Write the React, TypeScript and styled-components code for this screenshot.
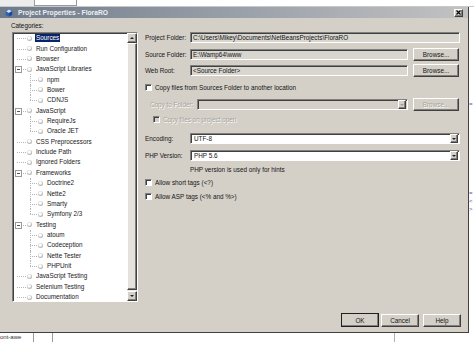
import React from "react";
import styled, { createGlobalStyle, css } from "styled-components";

const FACE = "#d4d0c8";
const FONT = "6.35px";

const GlobalStyle = createGlobalStyle`
  html, body {
    margin: 0;
    padding: 0;
    background: #fff;
  }
  body {
    font-family: "Liberation Sans", Arial, sans-serif;
    overflow: hidden;
  }
`;

interface TreeItem {
  label: string;
  level: number;
  expander?: boolean;
  last?: boolean;
  selected?: boolean;
}

const tree: TreeItem[] = [
  { label: "Sources", level: 0, selected: true },
  { label: "Run Configuration", level: 0 },
  { label: "Browser", level: 0 },
  { label: "JavaScript Libraries", level: 0, expander: true },
  { label: "npm", level: 1 },
  { label: "Bower", level: 1 },
  { label: "CDNJS", level: 1, last: true },
  { label: "JavaScript", level: 0, expander: true },
  { label: "RequireJs", level: 1 },
  { label: "Oracle JET", level: 1, last: true },
  { label: "CSS Preprocessors", level: 0 },
  { label: "Include Path", level: 0 },
  { label: "Ignored Folders", level: 0 },
  { label: "Frameworks", level: 0, expander: true },
  { label: "Doctrine2", level: 1 },
  { label: "Nette2", level: 1 },
  { label: "Smarty", level: 1 },
  { label: "Symfony 2/3", level: 1, last: true },
  { label: "Testing", level: 0, expander: true },
  { label: "atoum", level: 1 },
  { label: "Codeception", level: 1 },
  { label: "Nette Tester", level: 1 },
  { label: "PHPUnit", level: 1, last: true },
  { label: "JavaScript Testing", level: 0 },
  { label: "Selenium Testing", level: 0 },
  { label: "Documentation", level: 0 },
];

const App: React.FC = () => {
  return (
    <Page>
      <GlobalStyle />
      <TopStrip>
        <TopGrey />
        <TopTab />
      </TopStrip>
      <Middle>
        <Dialog>
          <TitleBar>
            <svg width="8" height="8" viewBox="0 0 8 8">
              <circle cx="4" cy="4" r="3.6" fill="#2f63b5" />
              <path d="M4 0.6 L6.9 2.3 L4 4 L1.1 2.3 Z" fill="#cfe0f6" />
              <path d="M4 4 L6.9 2.3 L6.9 5.6 L4 7.3 Z" fill="#1c4690" />
            </svg>
            <TitleText>Project Properties - FloraRO</TitleText>
            <CloseButton>
              <svg width="5" height="5" viewBox="0 0 5 5">
                <path d="M0.5 0.5 L4.5 4.5 M4.5 0.5 L0.5 4.5" stroke="#000" strokeWidth="1.1" />
              </svg>
            </CloseButton>
          </TitleBar>
          <Body>
            <Main>
              <LeftColumn>
                <CategoriesLabel>Categories:</CategoriesLabel>
                <TreePanel>
                  <TreeList>
                    {tree.map((item) => (
                      <TreeRow key={item.label} $level={item.level}>
                        <Connector $child={item.level > 0} $last={item.last}>
                          {item.expander && <Expander />}
                        </Connector>
                        <NodeDot />
                        <NodeLabel $selected={item.selected}>{item.label}</NodeLabel>
                      </TreeRow>
                    ))}
                  </TreeList>
                  <ScrollBar>
                    <ScrollArrow>
                      <ArrowUp />
                    </ScrollArrow>
                    <ScrollTrack>
                      <ScrollThumb />
                    </ScrollTrack>
                    <ScrollArrow>
                      <ArrowDown />
                    </ScrollArrow>
                  </ScrollBar>
                </TreePanel>
              </LeftColumn>
              <RightColumn>
                <FormRow $top={0}>
                  <FieldLabel>Project Folder:</FieldLabel>
                  <TextField>{"C:\\Users\\Mikey\\Documents\\NetBeansProjects\\FloraRO"}</TextField>
                </FormRow>
                <FormRow $top={3.5}>
                  <FieldLabel>Source Folder:</FieldLabel>
                  <TextField>{"E:\\Wamp64\\www"}</TextField>
                  <Button $width={46}>Browse...</Button>
                </FormRow>
                <FormRow $top={3.5}>
                  <FieldLabel>Web Root:</FieldLabel>
                  <TextField>{"<Source Folder>"}</TextField>
                  <Button $width={46}>Browse...</Button>
                </FormRow>
                <FormRow $top={4}>
                  <CheckBox />
                  <CheckLabel>Copy files from Sources Folder to another location</CheckLabel>
                </FormRow>
                <FormRow $top={4} $indent={5}>
                  <FieldLabel $width={47} $disabled>
                    Copy to Folder:
                  </FieldLabel>
                  <ComboBox $disabled>
                    <ComboText />
                    <ComboArrow>
                      <ArrowDown $disabled />
                    </ComboArrow>
                  </ComboBox>
                  <Button $width={46} $disabled>
                    Browse...
                  </Button>
                </FormRow>
                <FormRow $top={2} $indent={8}>
                  <CheckBox $disabled />
                  <CheckLabel $disabled>Copy files on project open</CheckLabel>
                </FormRow>
                <FormRow $top={6}>
                  <FieldLabel>Encoding:</FieldLabel>
                  <ComboBox>
                    <ComboText>UTF-8</ComboText>
                    <ComboArrow>
                      <ArrowDown />
                    </ComboArrow>
                  </ComboBox>
                </FormRow>
                <FormRow $top={4}>
                  <FieldLabel>PHP Version:</FieldLabel>
                  <ComboBox>
                    <ComboText>PHP 5.6</ComboText>
                    <ComboArrow>
                      <ArrowDown />
                    </ComboArrow>
                  </ComboBox>
                </FormRow>
                <HintRow>PHP version is used only for hints</HintRow>
                <FormRow $top={1.5}>
                  <CheckBox />
                  <CheckLabel>{"Allow short tags (<?)"}</CheckLabel>
                </FormRow>
                <FormRow $top={1}>
                  <CheckBox />
                  <CheckLabel>{"Allow ASP tags (<% and %>)"}</CheckLabel>
                </FormRow>
              </RightColumn>
            </Main>
            <Footer>
              <Button $width={38} $default>
                OK
              </Button>
              <Button $width={38}>Cancel</Button>
              <Button $width={38} $gap={5}>
                Help
              </Button>
            </Footer>
          </Body>
        </Dialog>
        <Gutter>
          <GutterText $top={94}>=</GutterText>
          <GutterText $top={82}>=</GutterText>
          <GutterText $top={1}>&lt;</GutterText>
          <GutterText $top={1}>&gt;</GutterText>
        </Gutter>
      </Middle>
      <BottomStrip>
        <BottomText>ont-awe</BottomText>
        <BottomTab />
        <BottomDivider />
      </BottomStrip>
    </Page>
  );
};

export default App;

const raised = css`
  border: 1px solid;
  border-color: #fff #404040 #404040 #fff;
  box-shadow: inset -1px -1px 0 #808080;
`;

const sunken = css`
  border: 1px solid;
  border-color: #808080 #fff #fff #808080;
  box-shadow: inset 1px 1px 0 #404040;
`;

const Page = styled.div`
  width: 474px;
  height: 342px;
  display: flex;
  flex-direction: column;
  background: #fff;
  overflow: hidden;
`;

const TopStrip = styled.div`
  height: 7px;
  display: flex;
  border-bottom: 1px solid #c8c8c8;
  box-sizing: border-box;
`;

const TopGrey = styled.div`
  width: 34px;
  background: #ececec;
`;

const TopTab = styled.div`
  width: 41px;
  border: 1px solid #9a9a9a;
  border-top: none;
  background: #fff;
`;

const Middle = styled.div`
  display: flex;
  height: 326px;
`;

const Dialog = styled.div`
  width: 469px;
  height: 326px;
  box-sizing: border-box;
  display: flex;
  flex-direction: column;
  border-right: 1px solid #404040;
  border-bottom: 1px solid #404040;
`;

const TitleBar = styled.div`
  height: 11px;
  flex-shrink: 0;
  display: flex;
  align-items: center;
  gap: 5px;
  padding: 0 5px;
  background: linear-gradient(90deg, #6f7a89 0%, #959ca6 45%, #c2c2c2 100%);
`;

const TitleText = styled.span`
  font-size: 6.7px;
  font-weight: bold;
  color: #eef0f4;
  line-height: 11px;
`;

const CloseButton = styled.div`
  margin-left: auto;
  width: 9px;
  height: 8px;
  box-sizing: border-box;
  background: ${FACE};
  ${raised};
  display: flex;
  align-items: center;
  justify-content: center;
`;

const Body = styled.div`
  flex: 1;
  background: ${FACE};
  display: flex;
  flex-direction: column;
`;

const Main = styled.div`
  height: 284px;
  display: flex;
  align-items: flex-start;
`;

const LeftColumn = styled.div`
  width: 126px;
  margin-left: 12px;
  display: flex;
  flex-direction: column;
`;

const CategoriesLabel = styled.div`
  font-size: ${FONT};
  line-height: 9px;
  color: #111;
  margin: 3px 0 2px -1px;
`;

const TreePanel = styled.div`
  height: 270px;
  box-sizing: border-box;
  display: flex;
  background: #fff;
  ${sunken};
  overflow: hidden;
`;

const TreeList = styled.div`
  flex: 1;
  overflow: hidden;
`;

const TreeRow = styled.div<{ $level: number }>`
  height: 10.36px;
  display: flex;
  align-items: center;
  padding-left: ${(p) => 4 + p.$level * 11}px;
`;

const Connector = styled.div<{ $child?: boolean; $last?: boolean }>`
  position: relative;
  width: 10px;
  height: 100%;
  flex-shrink: 0;
  &::before {
    content: "";
    position: absolute;
    left: ${(p) => (p.$child ? 2 : 0)}px;
    right: 1px;
    top: 50%;
    border-top: 1px dotted #b4b4b4;
  }
  &::after {
    content: "";
    display: ${(p) => (p.$child ? "block" : "none")};
    position: absolute;
    left: 1.5px;
    top: 0;
    height: ${(p) => (p.$last ? "50%" : "100%")};
    border-left: 1px dotted #b4b4b4;
  }
`;

const Expander = styled.div`
  position: absolute;
  left: -2px;
  top: 50%;
  width: 7px;
  height: 7px;
  margin-top: -3px;
  box-sizing: border-box;
  border: 1px solid #9a9a9a;
  background: #fff;
  z-index: 1;
  &::after {
    content: "";
    position: absolute;
    left: 1px;
    right: 1px;
    top: 2px;
    border-top: 1px solid #555;
  }
`;

const NodeDot = styled.div`
  width: 5px;
  height: 5px;
  flex-shrink: 0;
  border-radius: 50%;
  background: radial-gradient(circle at 45% 40%, #fff 0 25%, #bcbcbc 60%, #999 100%);
`;

const NodeLabel = styled.span<{ $selected?: boolean }>`
  margin-left: 3px;
  padding: 0 1px;
  font-size: ${FONT};
  line-height: 8px;
  white-space: nowrap;
  color: ${(p) => (p.$selected ? "#fff" : "#1a1a1a")};
  background: ${(p) => (p.$selected ? "#0a246a" : "transparent")};
`;

const ScrollBar = styled.div`
  width: 10px;
  flex-shrink: 0;
  display: flex;
  flex-direction: column;
  background: #ecebe8;
`;

const ScrollArrow = styled.div`
  height: 10px;
  box-sizing: border-box;
  background: ${FACE};
  ${raised};
  display: flex;
  align-items: center;
  justify-content: center;
`;

const ScrollTrack = styled.div`
  flex: 1;
  display: flex;
  flex-direction: column;
  padding-bottom: 1px;
`;

const ScrollThumb = styled.div`
  flex: 1;
  box-sizing: border-box;
  background: #e4e2dd;
  ${raised};
`;

const ArrowUp = styled.div`
  width: 0;
  height: 0;
  border-left: 2px solid transparent;
  border-right: 2px solid transparent;
  border-bottom: 2.5px solid #222;
`;

const ArrowDown = styled.div<{ $disabled?: boolean }>`
  width: 0;
  height: 0;
  border-left: 2px solid transparent;
  border-right: 2px solid transparent;
  border-top: 2.5px solid ${(p) => (p.$disabled ? "#a09c94" : "#222")};
`;

const RightColumn = styled.div`
  width: 315px;
  margin-left: 5px;
  padding: 13px 0 0 2px;
  display: flex;
  flex-direction: column;
`;

const FormRow = styled.div<{ $top: number; $indent?: number }>`
  height: 13px;
  margin-top: ${(p) => p.$top}px;
  padding-left: ${(p) => p.$indent || 0}px;
  display: flex;
  align-items: center;
  gap: 5px;
`;

const FieldLabel = styled.span<{ $width?: number; $disabled?: boolean }>`
  width: ${(p) => (p.$width || 45) - 5}px;
  flex-shrink: 0;
  font-size: ${FONT};
  white-space: nowrap;
  color: ${(p) => (p.$disabled ? "#a6a298" : "#151515")};
  text-shadow: ${(p) => (p.$disabled ? "0.6px 0.6px 0 #fff" : "none")};
`;

const TextField = styled.div`
  flex: 1;
  height: 11px;
  box-sizing: border-box;
  ${sunken};
  background: #d9d6d0;
  font-size: ${FONT};
  line-height: 9px;
  padding-left: 2px;
  color: #151515;
  white-space: nowrap;
  overflow: hidden;
`;

const Button = styled.div<{ $width: number; $disabled?: boolean; $default?: boolean; $gap?: number }>`
  width: ${(p) => p.$width}px;
  height: ${(p) => (p.$default ? 14 : 13)}px;
  flex-shrink: 0;
  box-sizing: border-box;
  margin-right: 1px;
  margin-left: ${(p) => (p.$gap ? p.$gap - 3 : 0)}px;
  background: ${FACE};
  ${raised};
  ${(p) =>
    p.$default &&
    css`
      outline: 1px solid #202020;
      outline-offset: -1px;
    `}
  display: flex;
  align-items: center;
  justify-content: center;
  font-size: ${FONT};
  color: ${(p) => (p.$disabled ? "#a6a298" : "#151515")};
  text-shadow: ${(p) => (p.$disabled ? "0.6px 0.6px 0 #fff" : "none")};
`;

const ComboBox = styled.div<{ $disabled?: boolean }>`
  flex: 1;
  height: 11px;
  box-sizing: border-box;
  ${sunken};
  background: ${(p) => (p.$disabled ? FACE : "#fff")};
  display: flex;
  align-items: stretch;
  padding: 0 1px 0 0;
`;

const ComboText = styled.span`
  flex: 1;
  font-size: ${FONT};
  line-height: 9px;
  padding-left: 3px;
  color: #151515;
`;

const ComboArrow = styled.div`
  width: 8px;
  box-sizing: border-box;
  background: ${FACE};
  ${raised};
  display: flex;
  align-items: center;
  justify-content: center;
`;

const CheckBox = styled.div<{ $disabled?: boolean }>`
  width: 7px;
  height: 7px;
  flex-shrink: 0;
  box-sizing: border-box;
  ${sunken};
  background: ${(p) => (p.$disabled ? FACE : "#fff")};
  margin-right: -2px;
`;

const CheckLabel = styled.span<{ $disabled?: boolean }>`
  font-size: ${FONT};
  white-space: nowrap;
  color: ${(p) => (p.$disabled ? "#a6a298" : "#151515")};
  text-shadow: ${(p) => (p.$disabled ? "0.6px 0.6px 0 #fff" : "none")};
`;

const HintRow = styled.div`
  height: 10px;
  margin-top: 2.5px;
  padding-left: 45px;
  font-size: ${FONT};
  line-height: 10px;
  color: #151515;
`;

const Footer = styled.div`
  flex: 1;
  display: flex;
  align-items: flex-end;
  justify-content: flex-end;
  gap: 1px;
  padding: 0 6px 5px 0;
`;

const Gutter = styled.div`
  flex: 1;
  display: flex;
  flex-direction: column;
  background: #fff;
`;

const GutterText = styled.span<{ $top: number }>`
  margin-top: ${(p) => p.$top}px;
  font-size: 6px;
  line-height: 7px;
  color: #4a5a9a;
`;

const BottomStrip = styled.div`
  flex: 1;
  display: flex;
  background: #fff;
`;

const BottomText = styled.span`
  width: 33px;
  font-size: 6px;
  line-height: 9px;
  color: #333;
`;

const BottomTab = styled.div`
  width: 20px;
  box-sizing: border-box;
  border-left: 1px solid #9a9a9a;
  border-right: 1px solid #9a9a9a;
`;

const BottomDivider = styled.div`
  margin-left: 341px;
  width: 1px;
  background: #b0b0b0;
`;
